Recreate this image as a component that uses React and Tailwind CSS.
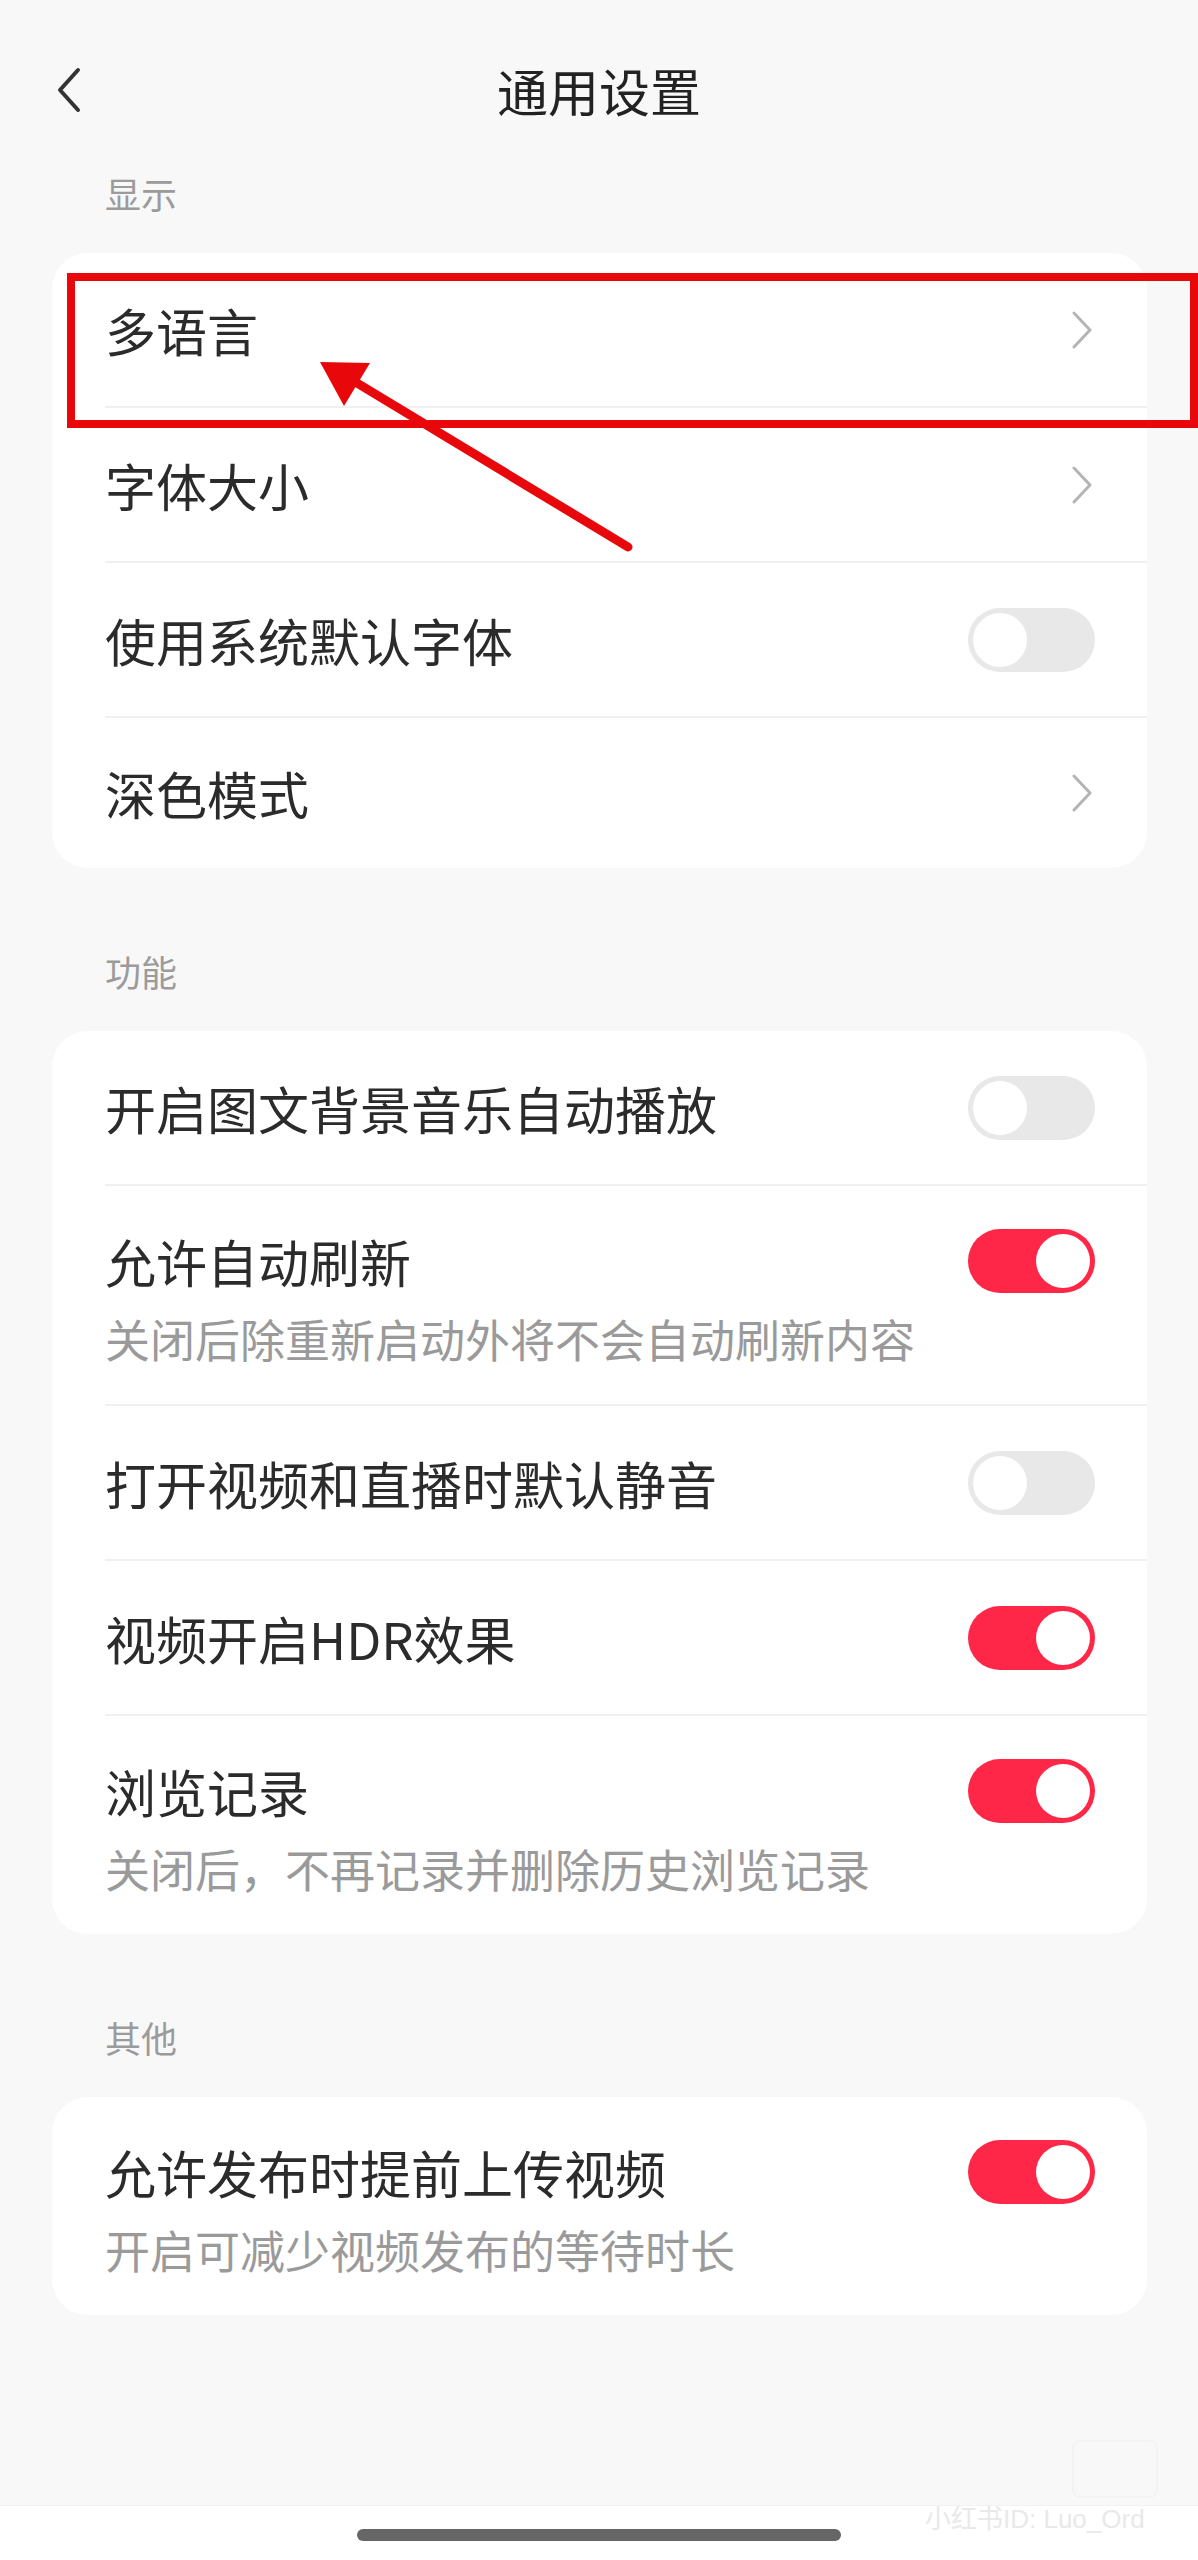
import React from "react";

const Toggle = ({ on }) =>
  on ? (
    <div className="w-[127px] h-[64px] rounded-full bg-[#fe2747] flex items-center justify-end px-[5px] shrink-0">
      <div className="w-[54px] h-[54px] rounded-full bg-white" />
    </div>
  ) : (
    <div className="w-[127px] h-[64px] rounded-full bg-[#e8e8e8] flex items-center justify-start px-[5px] shrink-0">
      <div className="w-[54px] h-[54px] rounded-full bg-white" />
    </div>
  );

const Chevron = () => (
  <svg width="22" height="38" viewBox="0 0 22 38" className="shrink-0 mr-[2px]">
    <path d="M3 2 L19 19 L3 36" fill="none" stroke="#b4b4b4" strokeWidth="3" strokeLinecap="round" strokeLinejoin="round" />
  </svg>
);

const Row = ({ title, sub, right, last, h }) => (
  <div className={"ml-[53px] pr-[52px] " + (last ? "" : "border-b-2 border-[#f0f0f0]")}>
    {sub ? (
      <div className="pt-[45px] pb-[38px]">
        <div className="flex items-center justify-between h-[60px]">
          <span className="text-[51px] leading-[60px] text-[#2b2b2b]">{title}</span>
          {right}
        </div>
        <div className="mt-[21px] text-[45px] leading-[54px] text-[#9a9a9a]">{sub}</div>
      </div>
    ) : (
      <div className={"flex items-center justify-between " + (h || "h-[153px]")}>
        <span className="text-[51px] leading-[60px] text-[#2b2b2b]">{title}</span>
        {right}
      </div>
    )}
  </div>
);

const Label = ({ children, top }) => (
  <div className={"pl-[105px] text-[36px] leading-[40px] text-[#9b9b9b] mb-[40px] " + top}>{children}</div>
);

const Card = ({ children }) => (
  <div className="ml-[52px] mr-[51px] bg-white rounded-[36px] overflow-hidden">{children}</div>
);

export default function App() {
  return (
    <div className="relative w-[1198px] h-[2560px] bg-[#f8f8f8] flex flex-col font-['Noto_Sans_CJK_SC','Noto_Sans',sans-serif] overflow-hidden">
      {/* Header */}
      <div className="relative mt-[45px] h-[90px] flex items-center justify-center">
        <svg width="26" height="46" viewBox="0 0 26 46" className="absolute left-[56px] top-[22px]">
          <path d="M22 3 L4 23 L22 43" fill="none" stroke="#333333" strokeWidth="4" strokeLinecap="round" strokeLinejoin="round" />
        </svg>
        <span className="text-[51px] leading-[60px] text-[#222222]">通用设置</span>
      </div>

      <Label top="mt-[38px]">显示</Label>
      <Card>
        <Row title="多语言" right={<Chevron />} />
        <Row title="字体大小" right={<Chevron />} />
        <Row title="使用系统默认字体" right={<Toggle on={false} />} />
        <Row title="深色模式" right={<Chevron />} last h="h-[150px]" />
      </Card>

      <Label top="mt-[83px]">功能</Label>
      <Card>
        <Row title="开启图文背景音乐自动播放" right={<Toggle on={false} />} />
        <Row title="允许自动刷新" sub="关闭后除重新启动外将不会自动刷新内容" right={<Toggle on />} />
        <Row title="打开视频和直播时默认静音" right={<Toggle on={false} />} />
        <Row title="视频开启HDR效果" right={<Toggle on />} />
        <Row title="浏览记录" sub="关闭后，不再记录并删除历史浏览记录" right={<Toggle on />} last />
      </Card>

      <Label top="mt-[83px]">其他</Label>
      <Card>
        <Row title="允许发布时提前上传视频" sub="开启可减少视频发布的等待时长" right={<Toggle on />} last />
      </Card>

      {/* Bottom home indicator band */}
      <div className="mt-auto h-[55px] bg-white border-t border-[#f2f2f2] flex justify-center pt-[23px]">
        <div className="w-[484px] h-[12px] rounded-full bg-[#666666]" />
      </div>

      {/* Watermark */}
      <div className="absolute left-[1072px] top-[2440px] w-[86px] h-[58px] rounded-[8px] border-2 border-[#f3f3f3]" />
      <div className="absolute left-[925px] top-[2504px] text-[26px] leading-[30px] text-[#e9e9e9] font-['Liberation_Sans','Noto_Sans_CJK_SC',sans-serif]">
        小红书ID: Luo_Ord
      </div>

      {/* Red annotation box */}
      <div className="absolute left-[67px] top-[273px] w-[1131px] h-[155px] border-[8px] border-[#e8080c]" />
      {/* Red annotation arrow */}
      <svg className="absolute left-0 top-0" width="1198" height="700" viewBox="0 0 1198 700">
        <line x1="628" y1="547" x2="352" y2="380" stroke="#e8080c" strokeWidth="9" strokeLinecap="round" />
        <polygon points="320,362 370,363 344,406" fill="#e8080c" />
      </svg>
    </div>
  );
}
